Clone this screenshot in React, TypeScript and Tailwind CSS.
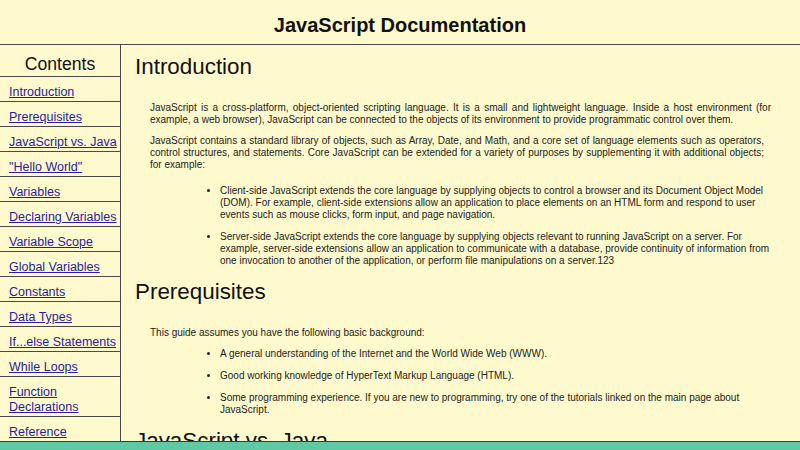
const topics = [
  "Introduction",
  "Prerequisites",
  "JavaScript vs. Java",
  '"Hello World"',
  "Variables",
  "Declaring Variables",
  "Variable Scope",
  "Global Variables",
  "Constants",
  "Data Types",
  "If...else Statements",
  "While Loops",
  "Function Declarations",
  "Reference",
];

function Sidebar() {
  return (
    <nav className="w-[121px] shrink-0 border-r border-[#4a4a4a]">
      <header className="box-border h-[32px] border-b border-[#4a4a4a] pt-[9px] text-center text-[17.6px] leading-[20px] text-[#111]">
        Contents
      </header>
      <ul>
        {topics.map((t) => (
          <li key={t} className="border-b border-[#4a4a4a] pb-[1.5px] pl-[9px] pt-[8px] text-[12.5px] leading-[14.5px]">
            <a href="#" className="text-[#2a1ca6] underline">
              {t}
            </a>
          </li>
        ))}
      </ul>
    </nav>
  );
}

function Heading({ children, first }: { children: React.ReactNode; first?: boolean }) {
  return (
    <h2
      className={
        first
          ? "mb-[22px] mt-[9px] text-[22.4px] leading-[26px] text-[#111]"
          : "mb-[22px] mt-[12px] text-[22.4px] leading-[26px] text-[#111]"
      }
    >
      {children}
    </h2>
  );
}

export default function App() {
  return (
    <div className="min-h-screen bg-[#fffacd] font-['Liberation_Sans',Arial,sans-serif] text-[#222]">
      <header className="box-border h-[45px] border-b border-[#4a4a4a] pt-[14px] text-center text-[20px] font-bold leading-[23px] text-[#111]">
        JavaScript Documentation
      </header>
      <div className="flex">
        <Sidebar />
        <main className="flex-1 px-[14px] pb-[40px] text-[10px] leading-[12px]">
          <section>
            <Heading first>Introduction</Heading>
            <p className="mx-[15px] mb-[9px] text-justify">
              JavaScript is a cross-platform, object-oriented scripting language. It is a small and lightweight language.
              Inside a host environment (for example, a web browser), JavaScript can be connected to the objects of its
              environment to provide programmatic control over them.
            </p>
            <p className="ml-[15px] mr-[22px] mb-[14px] text-justify">
              JavaScript contains a standard library of objects, such as Array, Date, and Math, and a core set of language
              elements such as operators, control structures, and statements. Core JavaScript can be extended for a variety
              of purposes by supplementing it with additional objects; for example:
            </p>
            <ul className="ml-[85px] mr-[15px] list-disc">
              <li className="mb-[10px]">
                Client-side JavaScript extends the core language by supplying objects to control a browser and its Document
                Object Model (DOM). For example, client-side extensions allow an application to place elements on an HTML
                form and respond to user events such as mouse clicks, form input, and page navigation.
              </li>
              <li>
                Server-side JavaScript extends the core language by supplying objects relevant to running JavaScript on a
                server. For example, server-side extensions allow an application to communicate with a database, provide
                continuity of information from one invocation to another of the application, or perform file manipulations
                on a server.123
              </li>
            </ul>
          </section>
          <section>
            <Heading>Prerequisites</Heading>
            <p className="mx-[15px] mb-[9px]">This guide assumes you have the following basic background:</p>
            <ul className="ml-[85px] mr-[15px] list-disc">
              <li className="mb-[10px]">A general understanding of the Internet and the World Wide Web (WWW).</li>
              <li className="mb-[10px]">Good working knowledge of HyperText Markup Language (HTML).</li>
              <li>
                Some programming experience. If you are new to programming, try one of the tutorials linked on the main
                page about JavaScript.
              </li>
            </ul>
          </section>
          <section>
            <Heading>JavaScript vs. Java</Heading>
            <p className="mx-[15px] mb-[12px] text-justify">
              JavaScript and Java are similar in some ways but fundamentally different in some others. The JavaScript
              language resembles Java but does not have Java's static typing and strong type checking.
            </p>
          </section>
        </main>
      </div>
      <footer className="fixed inset-x-0 bottom-0 h-[9px] border-t border-[#3a3a3a] bg-[#5fc9a5]" />
    </div>
  );
}
